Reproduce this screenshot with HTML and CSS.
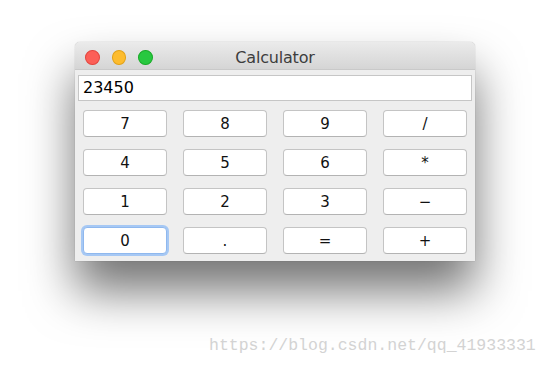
FILE: index.html
```html
<!DOCTYPE html>
<html>
<head>
<meta charset="utf-8">
<title>Calculator</title>
<link rel="stylesheet" href="styles.css">
</head>
<body>
<div class="window">
  <div class="titlebar">
    <div class="lights">
      <span class="light red"></span>
      <span class="light yellow"></span>
      <span class="light green"></span>
    </div>
    <div class="title">Calculator</div>
  </div>
  <div class="content">
    <div class="display">23450</div>
    <div class="keys">
      <button class="key">7</button>
      <button class="key">8</button>
      <button class="key">9</button>
      <button class="key">/</button>
      <button class="key">4</button>
      <button class="key">5</button>
      <button class="key">6</button>
      <button class="key">*</button>
      <button class="key">1</button>
      <button class="key">2</button>
      <button class="key">3</button>
      <button class="key">−</button>
      <button class="key focused">0</button>
      <button class="key">.</button>
      <button class="key">=</button>
      <button class="key">+</button>
    </div>
  </div>
</div>
<div class="watermark">https://blog.csdn.net/qq_41933331</div>
</body>
</html>
```
FILE: styles.css
```css
html, body {
  margin: 0;
  background: #ffffff;
}
body {
  padding: 42px 0 0 75px;
  font-family: "DejaVu Sans", "Liberation Sans", sans-serif;
  width: 550px;
  height: 368px;
  box-sizing: border-box;
  overflow: hidden;
}
.window {
  width: 400px;
  height: 219px;
  background: #eeeeee;
  border-radius: 5px 5px 0 0;
  box-shadow: 0 30px 48px rgba(0, 0, 0, 0.55), 0 0 1px rgba(0, 0, 0, 0.4);
  display: flex;
  flex-direction: column;
}
.titlebar {
  height: 27px;
  padding-top: 3px;
  box-sizing: border-box;
  border-bottom: 1px solid #c9c9c9;
  border-radius: 5px 5px 0 0;
  background: linear-gradient(#ebebeb, #d5d5d5);
  display: flex;
  align-items: center;
  flex: none;
}
.titlebar { height: 28px; }
.lights {
  display: flex;
  gap: 12px;
  padding-left: 10px;
  width: 78px;
  box-sizing: border-box;
}
.light {
  width: 15px;
  height: 15px;
  border-radius: 50%;
  box-sizing: border-box;
}
.red { background: #fc5f57; border: 1px solid #e2463f; }
.yellow { background: #fdbc2e; border: 1px solid #e1a116; }
.green { background: #28c840; border: 1px solid #1aab29; }
.title {
  flex: 1;
  text-align: center;
  margin-right: 78px;
  font-size: 16px;
  color: #3d3d3d;
  font-family: "DejaVu Sans", sans-serif;
  letter-spacing: -0.2px;
}
.content {
  padding: 5px 3px 0;
}
.display {
  height: 26px;
  box-sizing: border-box;
  background: #ffffff;
  border: 1px solid #c6c6c6;
  font-size: 16px;
  line-height: 24px;
  padding-left: 4px;
  color: #000;
}
.keys {
  display: grid;
  grid-template-columns: repeat(4, 84px);
  grid-auto-rows: 27px;
  column-gap: 16px;
  row-gap: 12px;
  margin: 9px 5px 0;
}
.key {
  background: #ffffff;
  border: 1px solid #c4c4c4;
  border-bottom-color: #b3b3b3;
  border-radius: 4px;
  font-family: "DejaVu Sans", sans-serif;
  font-size: 15px;
  color: #111;
  padding: 0;
}
.key.focused {
  border: 1px solid #8fb8ee;
  box-shadow: 0 0 0 2px #a6c8f4;
}
.watermark {
  margin: 75px 0 0 134px;
  font-family: "Liberation Mono", monospace;
  font-size: 16.5px;
  color: #d3d3d3;
  line-height: 20px;
}
```
